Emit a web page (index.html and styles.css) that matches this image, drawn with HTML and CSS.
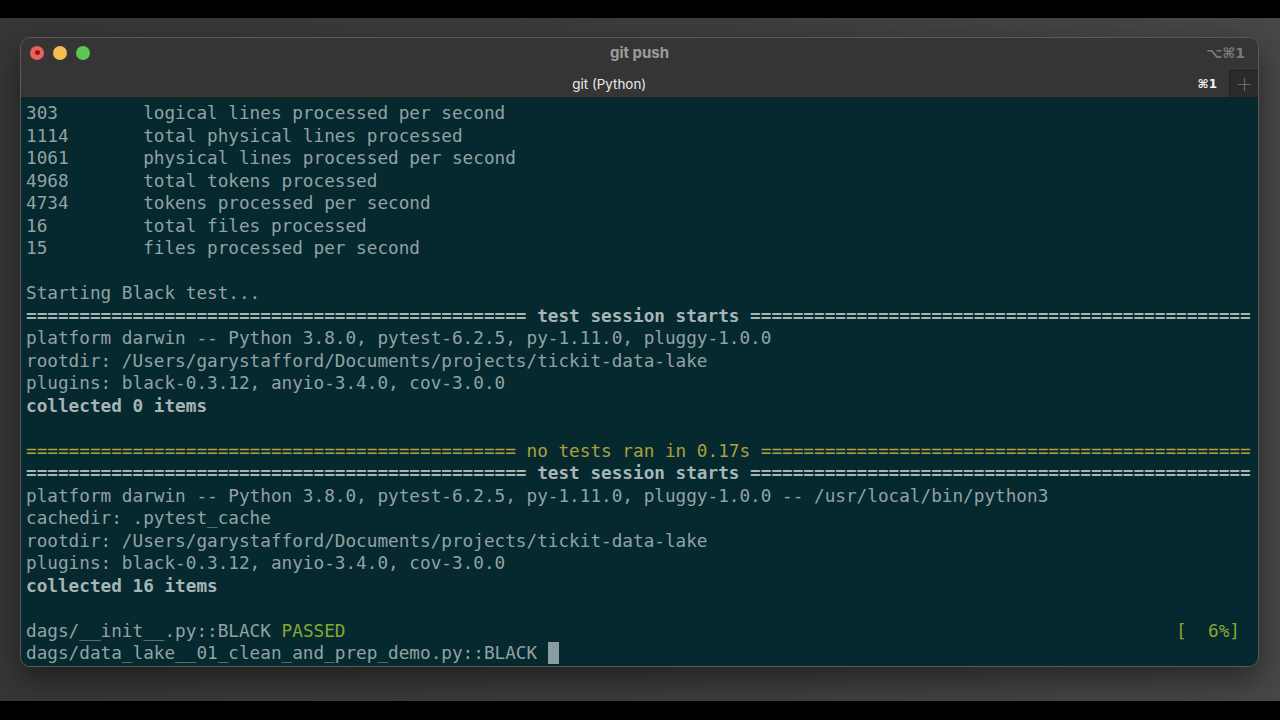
FILE: index.html
```html
<!DOCTYPE html>
<html lang="en">
<head>
<meta charset="utf-8">
<title>git push</title>
<link rel="stylesheet" href="styles.css">
</head>
<body>
<div class="letterbox"></div>
<div class="stage">
  <div class="window">
    <div class="titlebar">
      <div class="lights">
        <span class="light red"><span class="dot"></span></span>
        <span class="light yellow"></span>
        <span class="light green"></span>
      </div>
      <div class="title">git push</div>
      <div class="title-key">⌥⌘1</div>
    </div>
    <div class="tabbar">
      <div class="tab">
        <div class="tab-title">git (Python)</div>
        <div class="tab-key">⌘1</div>
      </div>
      <div class="newtab">
        <svg width="15" height="15" viewBox="0 0 15 15"><path d="M7.5 1v13M1 7.5h13" stroke="#6a6a6a" stroke-width="1.2" fill="none"/></svg>
      </div>
    </div>
    <div class="terminal">
<div class="line">303        logical lines processed per second</div>
<div class="line">1114       total physical lines processed</div>
<div class="line">1061       physical lines processed per second</div>
<div class="line">4968       total tokens processed</div>
<div class="line">4734       tokens processed per second</div>
<div class="line">16         total files processed</div>
<div class="line">15         files processed per second</div>
<div class="line"> </div>
<div class="line">Starting Black test...</div>
<div class="line bold">=============================================== test session starts ===============================================</div>
<div class="line">platform darwin -- Python 3.8.0, pytest-6.2.5, py-1.11.0, pluggy-1.0.0</div>
<div class="line">rootdir: /Users/garystafford/Documents/projects/tickit-data-lake</div>
<div class="line">plugins: black-0.3.12, anyio-3.4.0, cov-3.0.0</div>
<div class="line bold">collected 0 items</div>
<div class="line"> </div>
<div class="line yellow">============================================== no tests ran in 0.17s ==============================================</div>
<div class="line bold">=============================================== test session starts ===============================================</div>
<div class="line">platform darwin -- Python 3.8.0, pytest-6.2.5, py-1.11.0, pluggy-1.0.0 -- /usr/local/bin/python3</div>
<div class="line">cachedir: .pytest_cache</div>
<div class="line">rootdir: /Users/garystafford/Documents/projects/tickit-data-lake</div>
<div class="line">plugins: black-0.3.12, anyio-3.4.0, cov-3.0.0</div>
<div class="line bold">collected 16 items</div>
<div class="line"> </div>
<div class="line">dags/__init__.py::BLACK <span class="green">PASSED</span>                                                                              <span class="green">[  6%]</span></div>
<div class="line">dags/data_lake__01_clean_and_prep_demo.py::BLACK <span class="cursor"> </span></div>
    </div>
  </div>
</div>
<div class="letterbox bottom"></div>
</body>
</html>
```

FILE: styles.css
```css
html, body {
  margin: 0;
  padding: 0;
  background: #000;
  width: 1280px;
  height: 720px;
  overflow: hidden;
}

.letterbox {
  height: 18px;
  background: #000;
}

.letterbox.bottom {
  height: 19px;
}

.stage {
  height: 683px;
  box-sizing: border-box;
  padding: 19px 20px 0 20px;
  background: linear-gradient(90deg, #363636 0%, #3c3c3c 50%, #474747 100%);
}

.window {
  width: 1239px;
  height: 630px;
  box-sizing: border-box;
  border: 1px solid #5a5a5a;
  border-radius: 10px;
  overflow: hidden;
  display: flex;
  flex-direction: column;
  background: #353535;
  box-shadow: 0 12px 30px rgba(0, 0, 0, 0.45);
}

.titlebar {
  height: 32px;
  box-sizing: border-box;
  padding-bottom: 3px;
  flex: none;
  display: flex;
  align-items: center;
  position: relative;
  background: #353535;
}

.lights {
  display: flex;
  gap: 9px;
  padding-left: 9px;
  align-items: center;
}

.light {
  width: 14px;
  height: 14px;
  border-radius: 50%;
  display: flex;
  align-items: center;
  justify-content: center;
}

.light.red { background: #ed5f5e; }
.light.yellow { background: #f4bd4f; }
.light.green { background: #5fc653; }

.dot {
  width: 5px;
  height: 5px;
  border-radius: 50%;
  background: #8e1811;
}

.title {
  position: absolute;
  left: 0;
  right: 0;
  text-align: center;
  font-family: "Inter", "Liberation Sans", sans-serif;
  font-weight: 700;
  font-size: 15px;
  color: #9c9c9c;
}

.title-key {
  margin-left: auto;
  margin-right: 13px;
  font-family: "DejaVu Sans", sans-serif;
  font-weight: 700;
  font-size: 14px;
  color: #7a7a7a;
  position: relative;
}

.tabbar {
  height: 27px;
  flex: none;
  display: flex;
  background: #353535;
  border-bottom: 1px solid #1f1f1f;
}

.tab {
  flex: 1;
  display: flex;
  align-items: center;
}

.tab-title {
  flex: 1;
  text-align: center;
  font-family: "Inter", "Liberation Sans", sans-serif;
  font-size: 13.4px;
  color: #eeeeee;
}

.tab-key {
  margin-right: 12px;
  font-family: "DejaVu Sans", sans-serif;
  font-size: 12px;
  font-weight: 700;
  color: #f2f2f2;
}

.newtab {
  width: 28px;
  flex: none;
  display: flex;
  align-items: center;
  justify-content: center;
  background: #2b2b2b;
  border-left: 1px solid #232323;
  border-top: 1px solid #1e1e1e;
}

.terminal {
  flex: 1;
  background: #062930;
  padding: 4px 0 0 5px;
  font-family: "DejaVu Sans Mono", "Liberation Mono", monospace;
  font-size: 17.7px;
  line-height: 22.5px;
  color: #92a2a4;
}

.line {
  white-space: pre;
  height: 22.5px;
}

.bold {
  font-weight: 700;
  color: #a7b5b6;
}

.yellow {
  color: #aea03a;
}

.green {
  color: #88a632;
}

.cursor {
  display: inline-block;
  width: 11px;
  height: 22px;
  vertical-align: top;
  background: #8a9c9f;
}
```
